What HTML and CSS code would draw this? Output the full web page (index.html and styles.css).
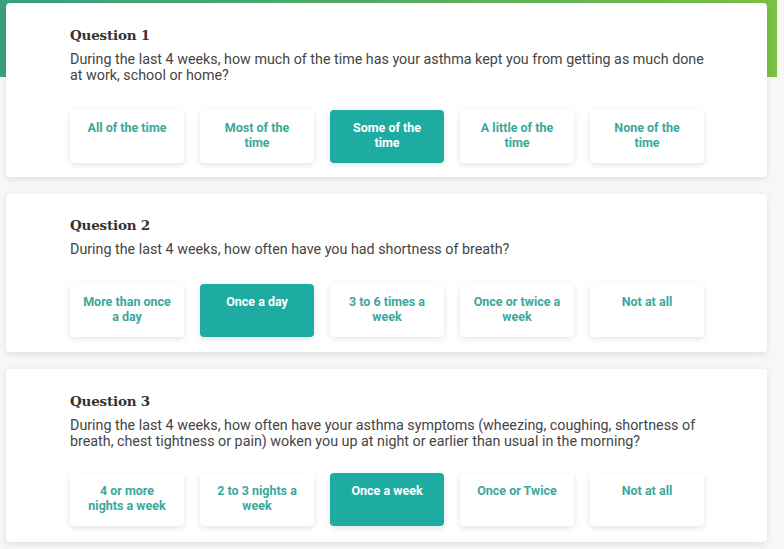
FILE: index.html
```html
<!DOCTYPE html>
<html lang="en">
<head>
<meta charset="utf-8">
<title>Asthma Control Questionnaire</title>
<link rel="stylesheet" href="styles.css">
</head>
<body>
<main class="page">
  <section class="card card-1">
    <h2 class="q-title">Question 1</h2>
    <p class="q-text">During the last 4 weeks, how much of the time has your asthma kept you from getting as much done at work, school or home?</p>
    <div class="options">
      <div class="opt">All of the time</div>
      <div class="opt">Most of the time</div>
      <div class="opt selected">Some of the time</div>
      <div class="opt">A little of the time</div>
      <div class="opt">None of the time</div>
    </div>
  </section>
  <section class="card card-2">
    <h2 class="q-title">Question 2</h2>
    <p class="q-text">During the last 4 weeks, how often have you had shortness of breath?</p>
    <div class="options">
      <div class="opt">More than once a day</div>
      <div class="opt selected">Once a day</div>
      <div class="opt">3 to 6 times a week</div>
      <div class="opt">Once or twice a week</div>
      <div class="opt">Not at all</div>
    </div>
  </section>
  <section class="card card-3">
    <h2 class="q-title">Question 3</h2>
    <p class="q-text">During the last 4 weeks, how often have your asthma symptoms (wheezing, coughing, shortness of breath, chest tightness or pain) woken you up at night or earlier than usual in the morning?</p>
    <div class="options">
      <div class="opt">4 or more nights a week</div>
      <div class="opt">2 to 3 nights a week</div>
      <div class="opt selected">Once a week</div>
      <div class="opt">Once or Twice</div>
      <div class="opt">Not at all</div>
    </div>
  </section>
</main>
</body>
</html>
```

FILE: styles.css
```css
* { box-sizing: border-box; }

html, body {
  margin: 0;
  padding: 0;
}

body {
  width: 784px;
  height: 549px;
  overflow: hidden;
  background:
    linear-gradient(90deg, #38a27f 0%, #52ad68 45%, #7cc143 100%) 0 0 / 777px 77px no-repeat,
    #f7f7f7;
  font-family: Roboto, "Noto Sans", Arial, sans-serif;
}

.page {
  display: flex;
  flex-direction: column;
  gap: 17px;
  padding: 3px 0 0 6px;
  width: 767px;
}

.card {
  background: #ffffff;
  border-radius: 4px;
  box-shadow: 0 2px 7px rgba(0, 0, 0, 0.10);
  padding: 22px 0 15px 64px;
}

.card-1 { padding-bottom: 14px; }
.card-2 { padding-top: 21px; }
.card-3 { padding-bottom: 16px; }
.card-3 .options { margin-top: 24px; }

.q-title {
  margin: 0;
  font-family: "DejaVu Serif", "Liberation Serif", serif;
  font-weight: bold;
  font-size: 13.5px;
  line-height: 20px;
  color: #333333;
  letter-spacing: -0.2px;
}

.q-text {
  margin: 6px 0 0;
  width: 640px;
  font-size: 14.3px;
  line-height: 16px;
  color: #454545;
}

.options {
  display: flex;
  gap: 16px;
  margin-top: 27px;
}

.opt {
  width: 114px;
  height: 53px;
  padding: 10px 12px 0;
  text-align: center;
  border-radius: 4px;
  background: #ffffff;
  box-shadow: 0 2px 6px rgba(0, 0, 0, 0.11);
  font-weight: bold;
  font-size: 12.5px;
  line-height: 15px;
  color: #3aa89c;
  cursor: pointer;
}

.opt.selected {
  background: #1eaba1;
  color: #ffffff;
}
```
